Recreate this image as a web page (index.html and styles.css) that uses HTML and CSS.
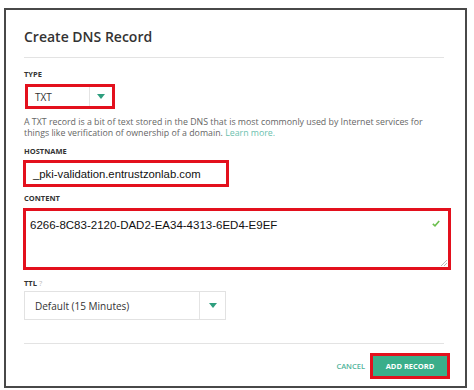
FILE: index.html
```html
<!DOCTYPE html>
<html>
<head>
<meta charset="utf-8">
<link rel="stylesheet" href="styles.css">
</head>
<body>
<div class="dialog">
  <h1 class="title">Create DNS Record</h1>
  <div class="rule"></div>
  <div class="form">
    <div class="label label-type">TYPE</div>
    <div class="select select-type">
      <span class="select-value">TXT</span>
      <span class="select-arrow"><svg width="8" height="5" viewBox="0 0 8 5"><path d="M0 0H8L4 5Z" fill="#2e9e7e"/></svg></span>
    </div>
    <p class="help">A TXT record is a bit of text stored in the DNS that is most commonly used by Internet services for<br>things like verification of ownership of a domain. <a class="link">Learn more.</a></p>
    <div class="label label-host">HOSTNAME</div>
    <div class="input input-host">_pki-validation.entrustzonlab.com</div>
    <div class="label label-content">CONTENT</div>
    <div class="textarea">
      <span class="textarea-value">6266-8C83-2120-DAD2-EA34-4313-6ED4-E9EF</span>
      <svg class="check" width="8" height="7" viewBox="0 0 8 7"><path d="M0.8 3.8L3 5.8L7.2 1" fill="none" stroke="#6cbf4f" stroke-width="1.6"/></svg>
      <svg class="grip" width="6" height="6" viewBox="0 0 6 6"><path d="M0 6L6 0M3 6L6 3" stroke="#aaa" stroke-width="0.8"/></svg>
    </div>
    <div class="label label-ttl">TTL <span class="q">?</span></div>
    <div class="select select-ttl">
      <span class="select-value">Default (15 Minutes)</span>
      <span class="select-arrow"><svg width="8" height="5" viewBox="0 0 8 5"><path d="M0 0H8L4 5Z" fill="#2e9e7e"/></svg></span>
    </div>
  </div>
  <div class="rule rule-foot"></div>
  <div class="actions">
    <span class="btn-cancel">CANCEL</span>
    <span class="btn-add">ADD RECORD</span>
  </div>
</div>
</body>
</html>
```

FILE: styles.css
```css
* { box-sizing: border-box; }
html, body { margin: 0; padding: 0; background: #fff; }
body { font-family: "Open Sans", "DejaVu Sans", sans-serif; color: #333; }

.dialog {
  margin: 8px 0 0 4px;
  width: 463px;
  height: 380px;
  border: 2px solid #484848;
  padding: 0 19px 0 18px;
  display: flex;
  flex-direction: column;
}

.title {
  margin: 17px 0 10px 0;
  font-size: 14px;
  line-height: 20px;
  font-weight: 600;
  color: #333;
}

.rule { height: 1px; background: #e3e3e3; margin-right: 2px; }

.form { display: flex; flex-direction: column; align-items: flex-start; }

.label {
  font-size: 7.5px;
  line-height: 10px;
  font-weight: 700;
  color: #333;
  margin-bottom: 5px;
}
.label-type { margin-top: 11px; }
.label-host { margin-top: 7px; margin-bottom: 4px; }
.label-content { margin-top: 6px; margin-bottom: 5px; }
.label-ttl { margin-top: 8px; margin-bottom: 3px; }
.q { color: #bbb; font-weight: 400; }

.select {
  display: flex;
  align-items: stretch;
  background: #fff;
}
.select-value {
  flex: 1;
  display: flex;
  align-items: center;
  font-size: 10px;
  color: #333;
}
.select-arrow {
  display: flex;
  align-items: center;
  justify-content: center;
  border-left: 1px solid #e4e4e4;
}

.select-type {
  width: 90px;
  height: 25px;
  margin-left: 1px;
  border: 3px solid #e3101d;
}
.select-type .select-value { padding-left: 7px; }
.select-type .select-arrow { width: 23px; }

.select-ttl {
  width: 202px;
  height: 29px;
  border: 1px solid #e2e2e2;
}
.select-ttl .select-value { padding-left: 10px; }
.select-ttl .select-arrow { width: 26px; }

.help {
  margin: 8px 0 0 0;
  font-size: 8.8px;
  line-height: 11px;
  color: #666;
  white-space: nowrap;
}
.link { color: #6bbfae; }

.input {
  width: 206px;
  height: 27px;
  margin-left: -1px;
  border: 3px solid #e3101d;
  padding-left: 7px;
  display: flex;
  align-items: center;
  font-family: "Liberation Sans", Arial, sans-serif;
  font-size: 11.3px;
  color: #111;
}

.textarea {
  position: relative;
  width: 428px;
  height: 62px;
  margin-left: -1px;
  border: 3px solid #e3101d;
  padding: 7px 0 0 4px;
  font-family: "Liberation Sans", Arial, sans-serif;
  font-size: 11.5px;
  line-height: 14px;
  color: #111;
}
.check { position: absolute; right: 8px; top: 9px; }
.grip { position: absolute; right: 1px; bottom: 1px; }

.rule-foot { margin-top: 23px; }

.actions {
  display: flex;
  justify-content: flex-end;
  align-items: center;
  margin-top: 9px;
  margin-right: -4px;
}
.btn-cancel {
  font-size: 7.5px;
  font-weight: 600;
  color: #4fb39a;
  margin-right: 5px;
}
.btn-add {
  width: 80px;
  height: 26px;
  border: 3px solid #e3101d;
  background: #3aae8a;
  color: #fff;
  font-size: 7.5px;
  font-weight: 700;
  display: flex;
  align-items: center;
  justify-content: center;
}
```
